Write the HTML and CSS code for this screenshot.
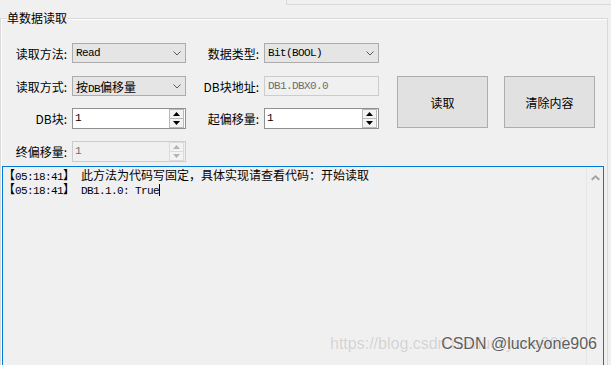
FILE: index.html
```html
<!DOCTYPE html>
<html lang="zh-CN">
<head>
    <meta charset="UTF-8">
    <meta name="viewport" content="width=device-width, initial-scale=1.0">
    <title>单数据读取</title>
    <link rel="stylesheet" href="styles.css">
</head>
<body>
    <div class="window">
        <!-- bottom edge of the group above -->
        <div class="top-strip">
            <div class="prev-box"></div>
        </div>

        <div class="group">
            <span class="group-title">单数据读取</span>

            <div class="form">
                <div class="fields">
                    <label class="lbl">读取方法:</label>
                    <div class="combo">
                        <span class="en">Read</span>
                        <svg class="chevron" width="8" height="5" viewBox="0 0 8 5"><polyline points="0.5,0.5 4,4 7.5,0.5" /></svg>
                    </div>
                    <label class="lbl">数据类型:</label>
                    <div class="combo">
                        <span class="en">Bit(BOOL)</span>
                        <svg class="chevron" width="8" height="5" viewBox="0 0 8 5"><polyline points="0.5,0.5 4,4 7.5,0.5" /></svg>
                    </div>

                    <label class="lbl">读取方式:</label>
                    <div class="combo">
                        <span>按<span class="en">DB</span>偏移量</span>
                        <svg class="chevron" width="8" height="5" viewBox="0 0 8 5"><polyline points="0.5,0.5 4,4 7.5,0.5" /></svg>
                    </div>
                    <label class="lbl">DB块地址:</label>
                    <div class="textbox disabled"><span class="en">DB1.DBX0.0</span></div>

                    <label class="lbl">DB块:</label>
                    <div class="spin">
                        <span class="spin-value en">1</span>
                        <div class="spin-btns">
                            <div class="spin-btn"><svg width="7" height="4" viewBox="0 0 7 4"><polygon points="0,4 3.5,0 7,4" /></svg></div>
                            <div class="spin-btn"><svg width="7" height="4" viewBox="0 0 7 4"><polygon points="0,0 7,0 3.5,4" /></svg></div>
                        </div>
                    </div>
                    <label class="lbl">起偏移量:</label>
                    <div class="spin">
                        <span class="spin-value en">1</span>
                        <div class="spin-btns">
                            <div class="spin-btn"><svg width="7" height="4" viewBox="0 0 7 4"><polygon points="0,4 3.5,0 7,4" /></svg></div>
                            <div class="spin-btn"><svg width="7" height="4" viewBox="0 0 7 4"><polygon points="0,0 7,0 3.5,4" /></svg></div>
                        </div>
                    </div>

                    <label class="lbl">终偏移量:</label>
                    <div class="spin disabled">
                        <span class="spin-value en">1</span>
                        <div class="spin-btns">
                            <div class="spin-btn"><svg width="7" height="4" viewBox="0 0 7 4"><polygon points="0,4 3.5,0 7,4" /></svg></div>
                            <div class="spin-btn"><svg width="7" height="4" viewBox="0 0 7 4"><polygon points="0,0 7,0 3.5,4" /></svg></div>
                        </div>
                    </div>
                </div>

                <div class="actions">
                    <button class="btn">读取</button>
                    <button class="btn">清除内容</button>
                </div>
            </div>

            <div class="log">
                <div class="log-text">
                    <div class="log-line">【<span class="en">05:18:41</span>】<span class="en"> </span>此方法为代码写固定，具体实现请查看代码：开始读取</div>
                    <div class="log-line">【<span class="en">05:18:41</span>】<span class="en"> DB1.1.0: True</span><span class="caret"></span></div>
                </div>
                <div class="scrollbar">
                    <svg class="scroll-up" width="9" height="6" viewBox="0 0 9 6"><polygon points="0,4 4.5,0 9,4 7.5,5.5 4.5,2.5 1.5,5.5" /></svg>
                </div>
            </div>
        </div>

        <div class="wm-url">https://blog.csdn.net/luckyone906</div>
        <div class="wm-name">CSDN @luckyone906</div>
    </div>
</body>
</html>
```

FILE: styles.css
```css
* {
    margin: 0;
    padding: 0;
    box-sizing: border-box;
}

body {
    font-family: "Noto Sans CJK SC", sans-serif;
    font-size: 12px;
    color: #000;
    background: #f0f0f0;
}

.window {
    position: relative;
    width: 611px;
    height: 365px;
    overflow: hidden;
    background: #f0f0f0;
}

.en {
    font-family: "Liberation Mono", monospace;
    font-size: 11px;
    letter-spacing: -0.6px;
}

/* remains of the box above */
.top-strip {
    height: 5px;
}

.prev-box {
    margin-left: 286px;
    height: 5px;
    border-left: 1px solid #d9d9d9;
    border-bottom: 1px solid #d9d9d9;
}

/* group box */
.group {
    position: relative;
    width: 608px;
    height: 380px;
    margin-top: 13px;
    border: 1px solid #d9d9d9;
    box-shadow: inset 1px 1px 0 #fdfdfd;
}

.group-title {
    position: absolute;
    top: -9px;
    left: 5px;
    padding: 0 1px;
    line-height: 16px;
    background: #f0f0f0;
}

.form {
    display: flex;
    padding-top: 24px;
}

.fields {
    display: grid;
    grid-template-columns: 66px 114px 68px 115px;
    grid-template-rows: 21px 20px 21px 21px;
    column-gap: 5px;
    row-gap: 12px;
}

.lbl {
    text-align: right;
    line-height: 21px;
    white-space: nowrap;
}

.combo {
    display: flex;
    align-items: center;
    justify-content: space-between;
    height: 20px;
    padding: 0 4px 0 3px;
    background: #e5e5e5;
    border: 1px solid #acacac;
}

.chevron {
    fill: none;
    stroke: #5a5a5a;
    stroke-width: 1;
}

.textbox {
    display: flex;
    align-items: center;
    height: 20px;
    padding-left: 3px;
    background: #fff;
    border: 1px solid #8f8f8f;
}

.textbox.disabled {
    background: #f0f0f0;
    border-color: #cccccc;
    color: #6d6d6d;
}

.spin {
    display: flex;
    height: 21px;
    background: #fff;
    border: 1px solid #8f8f8f;
}

.spin-value {
    flex: 1;
    padding-left: 2px;
    line-height: 19px;
}

.spin-btns {
    display: flex;
    flex-direction: column;
    width: 15px;
    margin: 0 1px 0 0;
}

.spin-btn {
    flex: 1;
    display: flex;
    align-items: center;
    justify-content: center;
    background: #f3f3f3;
    border: 1px solid #b9b9b9;
}

.spin-btn + .spin-btn {
    border-top: none;
}

.spin-btn svg {
    fill: #000;
}

.spin.disabled {
    background: #f0f0f0;
    border-color: #cccccc;
    color: #6d6d6d;
}

.spin.disabled .spin-btn {
    border-color: #dcdcdc;
}

.spin.disabled .spin-btn svg {
    fill: #b4b4b4;
}

.actions {
    display: flex;
    gap: 16px;
    margin-left: 18px;
    padding-top: 33px;
}

.btn {
    width: 91px;
    height: 52px;
    font-family: inherit;
    font-size: 12px;
    color: #000;
    background: #e1e1e1;
    border: 1px solid #adadad;
}

/* output box */
.log {
    display: flex;
    width: 602px;
    height: 220px;
    margin: 4px 0 0 1px;
    border: 1px solid #0078d7;
}

.log-text {
    flex: 1;
    padding-top: 2px;
}

.log-line {
    line-height: 12px;
    white-space: nowrap;
}

.caret {
    display: inline-block;
    width: 1px;
    height: 12px;
    vertical-align: -2px;
    background: #000;
}

.scrollbar {
    width: 17px;
    padding-top: 8px;
    border-left: 1px solid #e6e6e6;
}

.scroll-up {
    display: block;
    margin: 0 auto;
    fill: #a3a3a3;
}

/* watermark */
.wm-url,
.wm-name {
    position: absolute;
    top: 335px;
    font-family: "Liberation Sans", Arial, sans-serif;
    font-size: 16px;
    line-height: 18px;
    white-space: nowrap;
}

.wm-url {
    left: 330px;
    color: #d2d2d2;
    text-shadow: 0 0 1px #fff;
}

.wm-name {
    right: 14px;
    color: #5e5e5e;
    text-shadow: 0 0 2px #fff;
}
```
